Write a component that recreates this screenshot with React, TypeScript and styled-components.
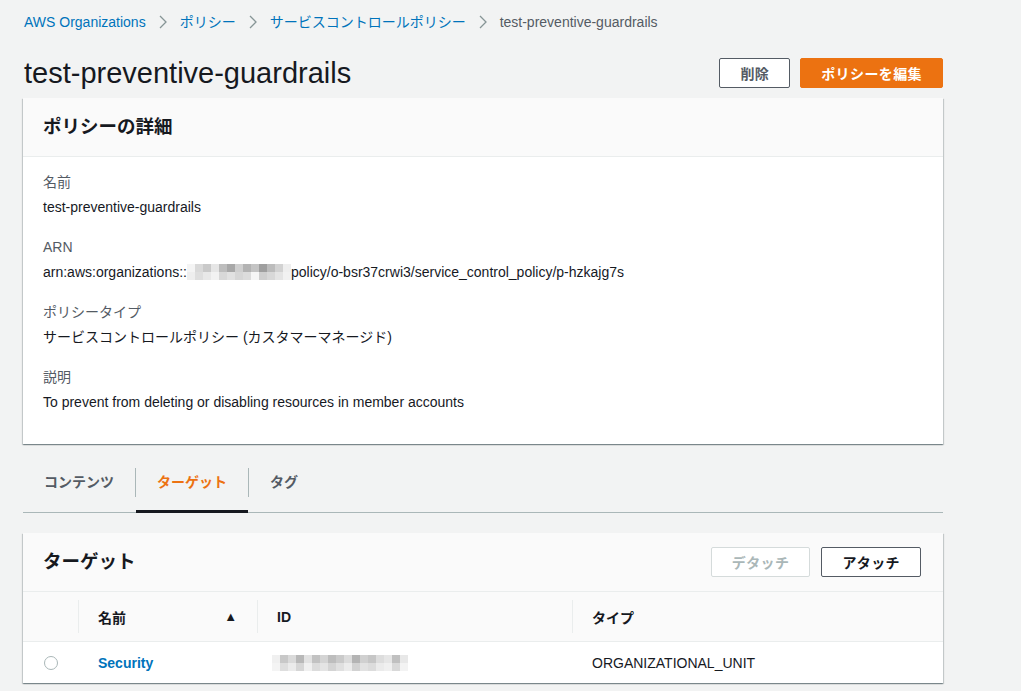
import styled, { createGlobalStyle } from 'styled-components'

const GlobalStyle = createGlobalStyle`
  html, body {
    margin: 0;
    padding: 0;
    background: #f2f3f3;
  }
  body {
    font-family: "Liberation Sans", "Noto Sans CJK JP", sans-serif;
    font-size: 14px;
    color: #16191f;
  }
`

// Pixelated masks used to hide account ids in the screenshot.
const arnMask = [
  ['#f4f4f4', '#d9d9d9', '#c9c9c9', '#e6e6e6', '#bdbdbd', '#a8a8a8', '#cfcfcf', '#b3b3b3', '#c4c4c4', '#9f9f9f', '#bcbcbc', '#d2d2d2', '#eeeeee'],
  ['#eeeeee', '#dedede', '#e8e8e8', '#f2f2f2', '#d8d8d8', '#e1e1e1', '#d6d6d6', '#dcdcdc', '#f6f6f6', '#cfcfcf', '#d8d8d8', '#e4e4e4', '#f1f1f1'],
]

const idMask = [
  ['#f0f0f0', '#c8c8c8', '#dadada', '#b8b8b8', '#e2e2e2', '#c2c2c2', '#d4d4d4', '#bdbdbd', '#cacaca', '#dcdcdc', '#b4b4b4', '#d0d0d0', '#c6c6c6', '#dddddd', '#e6e6e6', '#c0c0c0', '#e8e8e8'],
  ['#f4f4f4', '#dedede', '#ebebeb', '#d6d6d6', '#f0f0f0', '#dcdcdc', '#e4e4e4', '#d4d4d4', '#e0e0e0', '#ececec', '#d2d2d2', '#e2e2e2', '#dcdcdc', '#ebebeb', '#f0f0f0', '#d9d9d9', '#f3f3f3'],
]

const Mosaic = ({ cells, cell, width }: { cells: string[][]; cell: number; width: number }) => (
  <MaskSvg width={width} height={cells.length * cell} viewBox={`0 0 ${width} ${cells.length * cell}`}>
    {cells.map((row, r) =>
      row.map((c, i) => <rect key={`${r}-${i}`} x={i * cell} y={r * cell} width={cell} height={cell} fill={c} />),
    )}
  </MaskSvg>
)

const Chevron = () => (
  <ChevronSvg width="8" height="14" viewBox="0 0 8 14">
    <path d="M1 1 L7 7 L1 13" fill="none" stroke="#879596" strokeWidth="1.3" />
  </ChevronSvg>
)

const fields = [
  { label: '名前', value: 'test-preventive-guardrails' },
  { label: 'ARN', value: 'arn' },
  { label: 'ポリシータイプ', value: 'サービスコントロールポリシー (カスタマーマネージド)' },
  { label: '説明', value: 'To prevent from deleting or disabling resources in member accounts' },
]

export default function App() {
  return (
    <Page>
      <GlobalStyle />
      <Breadcrumbs>
        <Crumb href="#">AWS Organizations</Crumb>
        <Chevron />
        <Crumb href="#">ポリシー</Crumb>
        <Chevron />
        <Crumb href="#">サービスコントロールポリシー</Crumb>
        <Chevron />
        <Current>test-preventive-guardrails</Current>
      </Breadcrumbs>

      <HeaderRow>
        <Title>test-preventive-guardrails</Title>
        <Actions>
          <Button>削除</Button>
          <Button $variant="primary">ポリシーを編集</Button>
        </Actions>
      </HeaderRow>

      <Card>
        <CardHeader>
          <CardTitle>ポリシーの詳細</CardTitle>
        </CardHeader>
        <DetailBody>
          {fields.map((f) => (
            <Field key={f.label}>
              <Label>{f.label}</Label>
              {f.value === 'arn' ? (
                <Value>
                  arn:aws:organizations::
                  <Mosaic cells={arnMask} cell={8} width={104} />
                  policy/o-bsr37crwi3/service_control_policy/p-hzkajg7s
                </Value>
              ) : (
                <Value>{f.value}</Value>
              )}
            </Field>
          ))}
        </DetailBody>
      </Card>

      <TabList>
        <Tab>コンテンツ</Tab>
        <TabDivider />
        <Tab $active>ターゲット</Tab>
        <TabDivider />
        <Tab>タグ</Tab>
      </TabList>

      <Card $spaced>
        <CardHeader>
          <CardTitle>ターゲット</CardTitle>
          <Actions $gap={11}>
            <Button disabled>デタッチ</Button>
            <Button $dark>アタッチ</Button>
          </Actions>
        </CardHeader>
        <Table>
          <colgroup>
            <col style={{ width: 55 }} />
            <col style={{ width: 179 }} />
            <col style={{ width: 315 }} />
            <col />
          </colgroup>
          <thead>
            <tr>
              <Th />
              <Th $divider>
                <SortCell>
                  <span>名前</span>
                  <SortArrow>▲</SortArrow>
                </SortCell>
              </Th>
              <Th $divider>ID</Th>
              <Th $divider>タイプ</Th>
            </tr>
          </thead>
          <tbody>
            <tr>
              <Td $center>
                <Radio />
              </Td>
              <Td>
                <RowLink href="#">Security</RowLink>
              </Td>
              <Td $shift={-5}>
                <Mosaic cells={idMask} cell={8} width={138} />
              </Td>
              <Td>ORGANIZATIONAL_UNIT</Td>
            </tr>
          </tbody>
        </Table>
      </Card>
    </Page>
  )
}

const Page = styled.div`
  width: 920px;
  padding: 12px 0 7px 23px;
`

const Breadcrumbs = styled.nav`
  display: flex;
  align-items: center;
  gap: 9px;
  height: 20px;
  padding-left: 1px;
  line-height: 20px;
`

const Crumb = styled.a`
  color: #0073bb;
  text-decoration: none;
`

const Current = styled.span`
  color: #545b64;
`

const ChevronSvg = styled.svg`
  display: block;
  margin: 0 4px;
`

const HeaderRow = styled.div`
  display: flex;
  align-items: center;
  justify-content: space-between;
  margin-top: 23px;
  height: 36px;
`

const Title = styled.h1`
  margin: 0;
  padding-left: 1px;
  font-size: 29px;
  font-weight: 400;
  line-height: 36px;
  color: #16191f;
`

const Actions = styled.div<{ $gap?: number }>`
  display: flex;
  gap: ${(p) => p.$gap ?? 10}px;
`

const Button = styled.button<{ $variant?: 'primary'; $dark?: boolean }>`
  height: 30px;
  padding: 0 20px;
  border-radius: 2px;
  font-family: inherit;
  font-size: 14px;
  font-weight: 700;
  letter-spacing: 0.4px;
  cursor: pointer;
  border: 1px solid ${(p) => (p.$variant === 'primary' ? '#ec7211' : '#545b64')};
  background: ${(p) => (p.$variant === 'primary' ? '#ec7211' : '#ffffff')};
  color: ${(p) => (p.$variant === 'primary' ? '#ffffff' : p.$dark ? '#16191f' : '#545b64')};

  &:disabled {
    border-color: #d5dbdb;
    color: #aab7b8;
    cursor: default;
    min-width: 98px;
  }
`

const Card = styled.section<{ $spaced?: boolean }>`
  margin-top: ${(p) => (p.$spaced ? 20 : 7)}px;
  background: #ffffff;
  box-shadow: 0 1px 1px 0 rgba(0, 28, 36, 0.3), 1px 1px 1px 0 rgba(0, 28, 36, 0.15),
    -1px 1px 1px 0 rgba(0, 28, 36, 0.15);
`

const CardHeader = styled.header`
  display: flex;
  align-items: center;
  justify-content: space-between;
  height: 58px;
  padding: 0 22px 0 20px;
  background: #fafafa;
  border-bottom: 1px solid #eaeded;
`

const CardTitle = styled.h2`
  margin: 0;
  font-size: 18.5px;
  font-weight: 700;
  line-height: 22px;
  color: #16191f;
`

const DetailBody = styled.div`
  display: flex;
  flex-direction: column;
  gap: 20px;
  padding: 15px 20px 32px;
`

const Field = styled.div`
  display: flex;
  flex-direction: column;
  gap: 5px;
`

const Label = styled.div`
  line-height: 20px;
  color: #545b64;
`

const Value = styled.div`
  display: flex;
  align-items: center;
  line-height: 20px;
  color: #16191f;
`

const MaskSvg = styled.svg`
  display: block;
  flex-shrink: 0;
`

const TabList = styled.div`
  display: flex;
  margin-top: 16px;
  border-bottom: 1px solid #aab7b8;
`

const Tab = styled.div<{ $active?: boolean }>`
  height: 53px;
  box-sizing: border-box;
  padding: 12px 21px 0;
  line-height: 20px;
  font-weight: 700;
  color: ${(p) => (p.$active ? '#ec7211' : '#545b64')};
  border-bottom: 3px solid ${(p) => (p.$active ? '#16191f' : 'transparent')};
  margin-bottom: -1px;
`

const TabDivider = styled.div`
  width: 1px;
  height: 29px;
  margin-top: 8px;
  background: #aab7b8;
`

const Table = styled.table`
  width: 100%;
  border-collapse: collapse;
  table-layout: fixed;
`

const Th = styled.th<{ $divider?: boolean }>`
  position: relative;
  height: 49px;
  padding: 0 20px;
  background: #fafafa;
  text-align: left;
  font-weight: 700;
  color: #16191f;
  border-bottom: 1px solid #eaeded;

  ${(p) =>
    p.$divider &&
    `
    &::before {
      content: '';
      position: absolute;
      left: 0;
      top: 8px;
      bottom: 8px;
      width: 1px;
      background: #eaeded;
    }
  `}
`

const SortCell = styled.div`
  display: flex;
  align-items: center;
  justify-content: space-between;
`

const SortArrow = styled.span`
  font-size: 13px;
  color: #16191f;
`

const Td = styled.td<{ $center?: boolean; $shift?: number }>`
  height: 41px;
  padding: 0 ${(p) => (p.$center ? 0 : 20)}px 0 ${(p) => (p.$center ? 21 : 20 + (p.$shift ?? 0))}px;
  color: #16191f;
`

const Radio = styled.span`
  display: block;
  width: 12px;
  height: 12px;
  border: 1px solid #aab7b8;
  border-radius: 50%;
  background: #ffffff;
`

const RowLink = styled.a`
  color: #0073bb;
  font-weight: 700;
  text-decoration: none;
`
